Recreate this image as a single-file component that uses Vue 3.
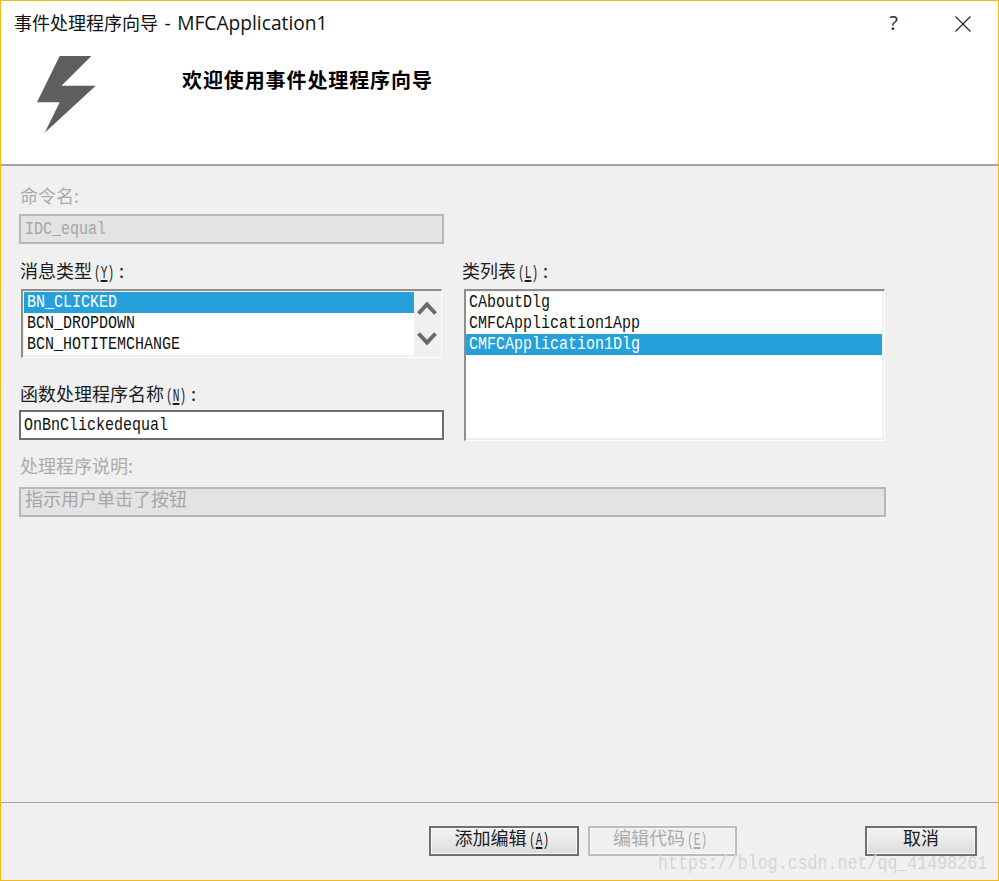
<script setup>
const typeItems = [
  { text: 'BN_CLICKED', selected: true },
  { text: 'BCN_DROPDOWN', selected: false },
  { text: 'BCN_HOTITEMCHANGE', selected: false },
]
const classItems = [
  { text: 'CAboutDlg', selected: false },
  { text: 'CMFCApplication1App', selected: false },
  { text: 'CMFCApplication1Dlg', selected: true },
]
</script>

<template>
  <div class="dialog">
    <header class="header">
      <div class="titlebar">
        <span class="title">事件处理程序向导<span class="app"> - MFCApplication1</span></span>
        <span class="help">?</span>
        <svg class="close" width="16" height="16" viewBox="0 0 16 16">
          <path d="M0.5 0.5L15.5 15.5M15.5 0.5L0.5 15.5" stroke="#222" stroke-width="1.1" fill="none" />
        </svg>
      </div>
      <div class="hero">
        <svg class="bolt" width="60" height="78" viewBox="0 0 60 78">
          <polygon points="22.7,0 54.4,0 24.4,29.7 58.7,29.7 7.7,76.8 22.7,46.3 0,46.3" fill="#5e5e5e" />
        </svg>
        <h1 class="heading">欢迎使用事件处理程序向导</h1>
      </div>
    </header>

    <main class="body">
      <label class="label disabled first">命令名:</label>
      <div class="field off command"><span class="mono">IDC_equal</span></div>

      <div class="columns">
        <div class="col-left">
          <label class="label">消息类型<span class="key"><span class="key-in">(<u>Y</u>)</span></span>:</label>
          <div class="list type-list">
            <div class="rows">
              <div v-for="item in typeItems" :key="item.text" class="row" :class="{ selected: item.selected }"><span class="mono">{{ item.text }}</span></div>
            </div>
            <div class="scroll">
              <svg width="22" height="16" viewBox="0 0 22 16">
                <path d="M2.5 13.5L11 4.5L19.5 13.5" stroke="#6a6a6a" stroke-width="4" fill="none" />
              </svg>
              <svg width="22" height="16" viewBox="0 0 22 16">
                <path d="M2.5 2.5L11 11.5L19.5 2.5" stroke="#6a6a6a" stroke-width="4" fill="none" />
              </svg>
            </div>
          </div>
          <label class="label func-label">函数处理程序名称<span class="key"><span class="key-in">(<u>N</u>)</span></span>:</label>
          <div class="field on"><span class="mono">OnBnClickedequal</span></div>
        </div>
        <div class="col-right">
          <label class="label">类列表<span class="key"><span class="key-in">(<u>L</u>)</span></span>:</label>
          <div class="list class-list">
            <div class="rows">
              <div v-for="item in classItems" :key="item.text" class="row" :class="{ selected: item.selected }"><span class="mono">{{ item.text }}</span></div>
            </div>
          </div>
        </div>
      </div>

      <label class="label disabled desc-label">处理程序说明:</label>
      <div class="field off desc">指示用户单击了按钮</div>
    </main>

    <footer class="footer">
      <button class="btn add">添加编辑<span class="key"><span class="key-in">(<u>A</u>)</span></span></button>
      <button class="btn edit" disabled>编辑代码<span class="key"><span class="key-in">(<u>E</u>)</span></span></button>
      <button class="btn cancel">取消</button>
    </footer>

    <div class="watermark"><span class="mark-in">https://blog.csdn.net/qq_41498261</span></div>
  </div>
</template>

<style>
html, body { margin: 0; background: #f0f0f0; }
</style>

<style scoped>
.dialog {
  position: relative;
  width: 999px;
  height: 881px;
  box-sizing: border-box;
  border: 1px solid #f6ba14;
  display: flex;
  flex-direction: column;
  background: #f0f0f0;
  font-family: "Noto Sans CJK SC", "Noto Sans", sans-serif;
  color: #1c1c1c;
  overflow: hidden;
}
.header {
  height: 163px;
  flex: none;
  background: #fff;
  border-bottom: 2px solid #a3a3a3;
}
.titlebar {
  height: 54px;
  display: flex;
  align-items: flex-start;
  padding: 8px 27px 0 13px;
  box-sizing: border-box;
}
.title {
  font-family: "Open Sans", "Noto Sans CJK SC", sans-serif;
  font-size: 18px;
  line-height: 28px;
  flex: 1;
  color: #111;
  white-space: pre;
}
.app {
  font-size: 19.2px;
  word-spacing: 1.5px;
}
.help {
  font-family: "Noto Sans", sans-serif;
  font-size: 20px;
  line-height: 28px;
  margin-right: 57px;
  color: #333;
}
.close { margin-top: 7px; }
.hero {
  display: flex;
  align-items: flex-start;
  padding: 1px 0 0 36px;
}
.heading {
  margin: 9px 0 0 85px;
  font-size: 20px;
  line-height: 30px;
  letter-spacing: 0.9px;
  font-weight: 700;
  color: #000;
  white-space: nowrap;
}
.body {
  flex: 1;
  padding: 18px 0 0 18px;
  min-height: 0;
}
.label {
  display: block;
  height: 24px;
  font-size: 18px;
  line-height: 22px;
  padding-left: 1px;
  white-space: nowrap;
}
.label.disabled { color: #ababab; }
.mono {
  display: inline-block;
  font-family: "Liberation Mono", monospace;
  font-size: 18px;
  transform: scaleX(0.8333);
  transform-origin: left center;
  white-space: nowrap;
}
.key {
  display: inline-block;
  width: 25px;
  height: 22px;
  margin-left: 2px;
  vertical-align: top;
  text-align: left;
}
.key-in {
  display: inline-block;
  font-family: "Liberation Mono", monospace;
  font-size: 18px;
  transform: scaleX(0.62);
  transform-origin: left center;
}
.key u {
  text-underline-offset: 2px;
  text-decoration-thickness: 2px;
}
.field {
  box-sizing: border-box;
  height: 30px;
  width: 425px;
  border: 2px solid #b8b8b8;
  padding: 0 4px;
  line-height: 22px;
  white-space: nowrap;
}
.off {
  background: #e3e3e3;
  color: #a6a6a6;
}
.on {
  background: #fff;
  border-color: #6e6e6e;
  color: #111;
  padding-left: 3px;
}
.command { margin-top: 6px; }
.columns {
  display: flex;
  margin-top: 15px;
}
.col-left { width: 442px; flex: none; }
.col-right { flex: none; }
.list {
  margin: 6px 0 0 2px;
  width: 421px;
  box-sizing: border-box;
  display: flex;
  background: #f0f0f0;
  border-style: solid;
  border-width: 2px 1px 1px 2px;
  border-color: #8e8e8e #fff #fff #8e8e8e;
  color: #111;
}
.type-list { height: 69px; padding: 1px 0 2px 1px; }
.class-list { height: 152px; margin-left: 3px; padding: 1px 2px 2px 0; }
.rows { flex: 1; background: #fff; }
.row {
  height: 21px;
  line-height: 17px;
  padding-left: 3px;
  white-space: nowrap;
  overflow: hidden;
}
.row.selected {
  background: #26a0da;
  color: #fff;
}
.scroll {
  width: 27px;
  flex: none;
  display: flex;
  flex-direction: column;
  align-items: center;
  gap: 15px;
  padding: 8px 2px 0 0;
  box-sizing: border-box;
}
.func-label { margin-top: 24px; }
.col-left .field { margin-top: 4px; }
.desc-label { margin-top: 14px; line-height: 20px; }
.desc {
  margin-top: 8px;
  width: 867px;
  font-size: 18px;
  line-height: 19px;
  padding-left: 4px;
}
.footer {
  height: 78px;
  flex: none;
  box-sizing: border-box;
  border-top: 1px solid #a3a3a3;
  display: flex;
  justify-content: flex-end;
  align-items: flex-start;
  padding: 23px 21px 0 0;
}
.btn {
  height: 30px;
  box-sizing: border-box;
  border: 2px solid #707070;
  box-shadow: inset 0 0 0 1px #f8f8f8;
  background: linear-gradient(#f3f3f3, #dcdcdc);
  font-family: inherit;
  font-size: 18px;
  line-height: 18px;
  color: #1c1c1c;
  padding: 0 0 8px;
}
.add { width: 150px; }
.edit {
  width: 149px;
  margin-left: 9px;
  border-color: #bcbcbc;
  background: #f0f0f0;
  color: #ababab;
}
.cancel {
  width: 112px;
  margin-left: 128px;
}
.watermark {
  position: absolute;
  left: 657px;
  top: 849px;
  line-height: 24px;
  color: #d6d6d0;
  white-space: nowrap;
  pointer-events: none;
}
.mark-in {
  display: inline-block;
  font-family: "Liberation Mono", monospace;
  font-size: 20px;
  transform: scaleX(0.831);
  transform-origin: left center;
}
</style>
